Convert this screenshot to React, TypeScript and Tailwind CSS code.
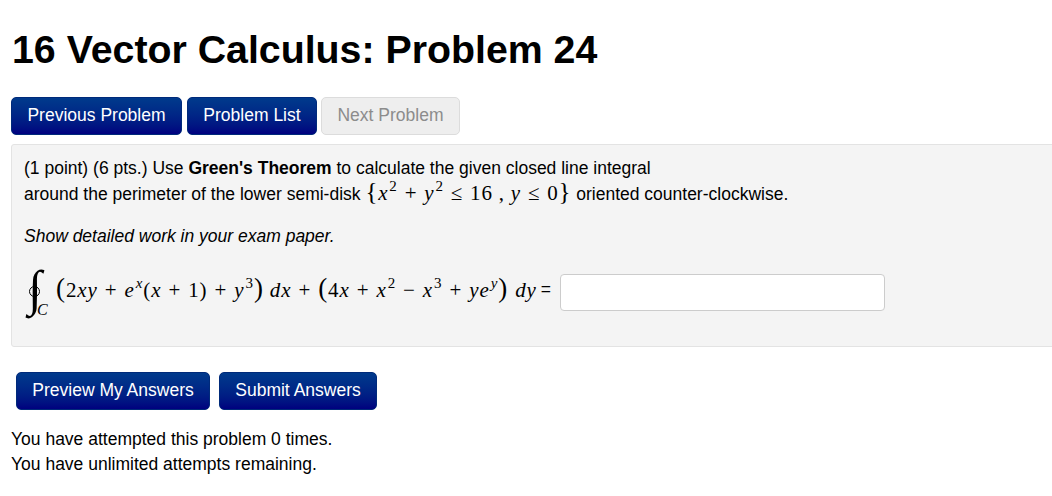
import React from "react";

const navBtn =
  "h-[38px] pb-[2px] rounded-[5px] border border-[#002a7a] bg-gradient-to-b from-[#003a8c] to-[#00007f] text-[17.5px] leading-[22px] text-white flex items-center justify-center";

const mathCls = "font-['Liberation_Serif',serif] text-black whitespace-nowrap tracking-[0.8px]";

function V({ children }: { children: React.ReactNode }) {
  return <i className="font-['Liberation_Serif',serif]">{children}</i>;
}

function Sup({ children }: { children: React.ReactNode }) {
  return <sup className="text-[15px] leading-none top-[-9px] ml-[1px] relative align-baseline">{children}</sup>;
}

function Op({ children }: { children: React.ReactNode }) {
  return <span className="mx-[7px]">{children}</span>;
}

export default function App() {
  return (
    <div className="w-[1052px] h-[496px] overflow-hidden bg-white font-['Liberation_Sans',Arial,sans-serif] text-[17.5px] text-black">
      <div className="w-[1070px] pl-[11px]">
        <h1 className="pt-[29px] pb-[1px] pl-[1px] text-[39.3px] leading-[40px] font-bold">16 Vector Calculus: Problem 24</h1>

        <div className="mt-[27px] flex gap-[5px]">
          <div className={`${navBtn} w-[171px]`}>Previous Problem</div>
          <div className={`${navBtn} w-[130px]`}>Problem List</div>
          <div className="h-[38px] pb-[2px] w-[139px] ml-[-1px] rounded-[5px] border border-[#dcdcdc] bg-[#eeeeee] text-[17.5px] leading-[22px] text-[#8c8c8c] flex items-center justify-center">
            Next Problem
          </div>
        </div>

        <div className="mt-[9px] h-[203px] rounded-[3px] border border-[#e3e3e3] bg-[#f4f4f4] pl-[12px] pt-[11px] leading-[25px]">
          <div>
            (1 point) (6 pts.) Use <b>Green's Theorem</b> to calculate the given closed line integral
          </div>
          <div className="flex items-baseline h-[25px] -mt-[2px]">
            <span>around the perimeter of the lower semi-disk&nbsp;</span>
            <span className={`${mathCls} text-[21px]`}>
              <span className="text-[25px] leading-none">{"{"}</span>
              <V>x</V>
              <Sup>2</Sup>
              <Op>+</Op>
              <V>y</V>
              <Sup>2</Sup>
              <Op>≤</Op>
              <span>16 ,</span>
              <span className="ml-[6px]"><V>y</V></span>
              <Op>≤</Op>
              <span>0</span>
              <span className="text-[25px] leading-none">{"}"}</span>
            </span>
            <span>&nbsp;oriented counter-clockwise.</span>
          </div>

          <div className="mt-[20px] italic">Show detailed work in your exam paper.</div>

          <div className="mt-[18px] flex items-center h-[50px]">
            <span className={`${mathCls} relative w-[31px] h-[50px] shrink-0`}>
              <span className="absolute left-[4px] top-[-4px] text-[50px] leading-[50px]">∫</span>
              <span className="absolute left-[5px] top-[19px] size-[11px] rounded-full border border-black" />
              <i className="absolute left-[13px] top-[33px] text-[16px] leading-[20px]">C</i>
            </span>
            <span className={`${mathCls} text-[21px] ml-[1px] -mt-[6px] tracking-[0.9px]`}>
              <span className="text-[27px] leading-none">(</span>2<V>xy</V>
              <Op>+</Op>
              <V>e</V>
              <Sup><V>x</V></Sup>
              (<V>x</V>
              <Op>+</Op>
              1)
              <Op>+</Op>
              <V>y</V>
              <Sup>3</Sup>
              <span className="text-[27px] leading-none">)</span>
              <span className="ml-[6px]"><V>dx</V></span>
              <Op>+</Op>
              <span className="text-[27px] leading-none">(</span>4<V>x</V>
              <Op>+</Op>
              <V>x</V>
              <Sup>2</Sup>
              <Op>−</Op>
              <V>x</V>
              <Sup>3</Sup>
              <Op>+</Op>
              <V>ye</V>
              <Sup><V>y</V></Sup>
              <span className="text-[27px] leading-none">)</span>
              <span className="ml-[7px]"><V>dy</V></span>
            </span>
            <span className="ml-[4px] -mt-[6px]">=</span>
            <div className="ml-[9px] h-[37px] w-[325px] rounded-[4px] border border-[#cccccc] bg-white" />
          </div>
        </div>

        <div className="mt-[25px] ml-[5px] flex gap-[9px]">
          <div className={`${navBtn} w-[194px]`}>Preview My Answers</div>
          <div className={`${navBtn} w-[158px]`}>Submit Answers</div>
        </div>

        <div className="mt-[17px] leading-[25px]">
          <div>You have attempted this problem 0 times.</div>
          <div>You have unlimited attempts remaining.</div>
        </div>
      </div>
    </div>
  );
}
